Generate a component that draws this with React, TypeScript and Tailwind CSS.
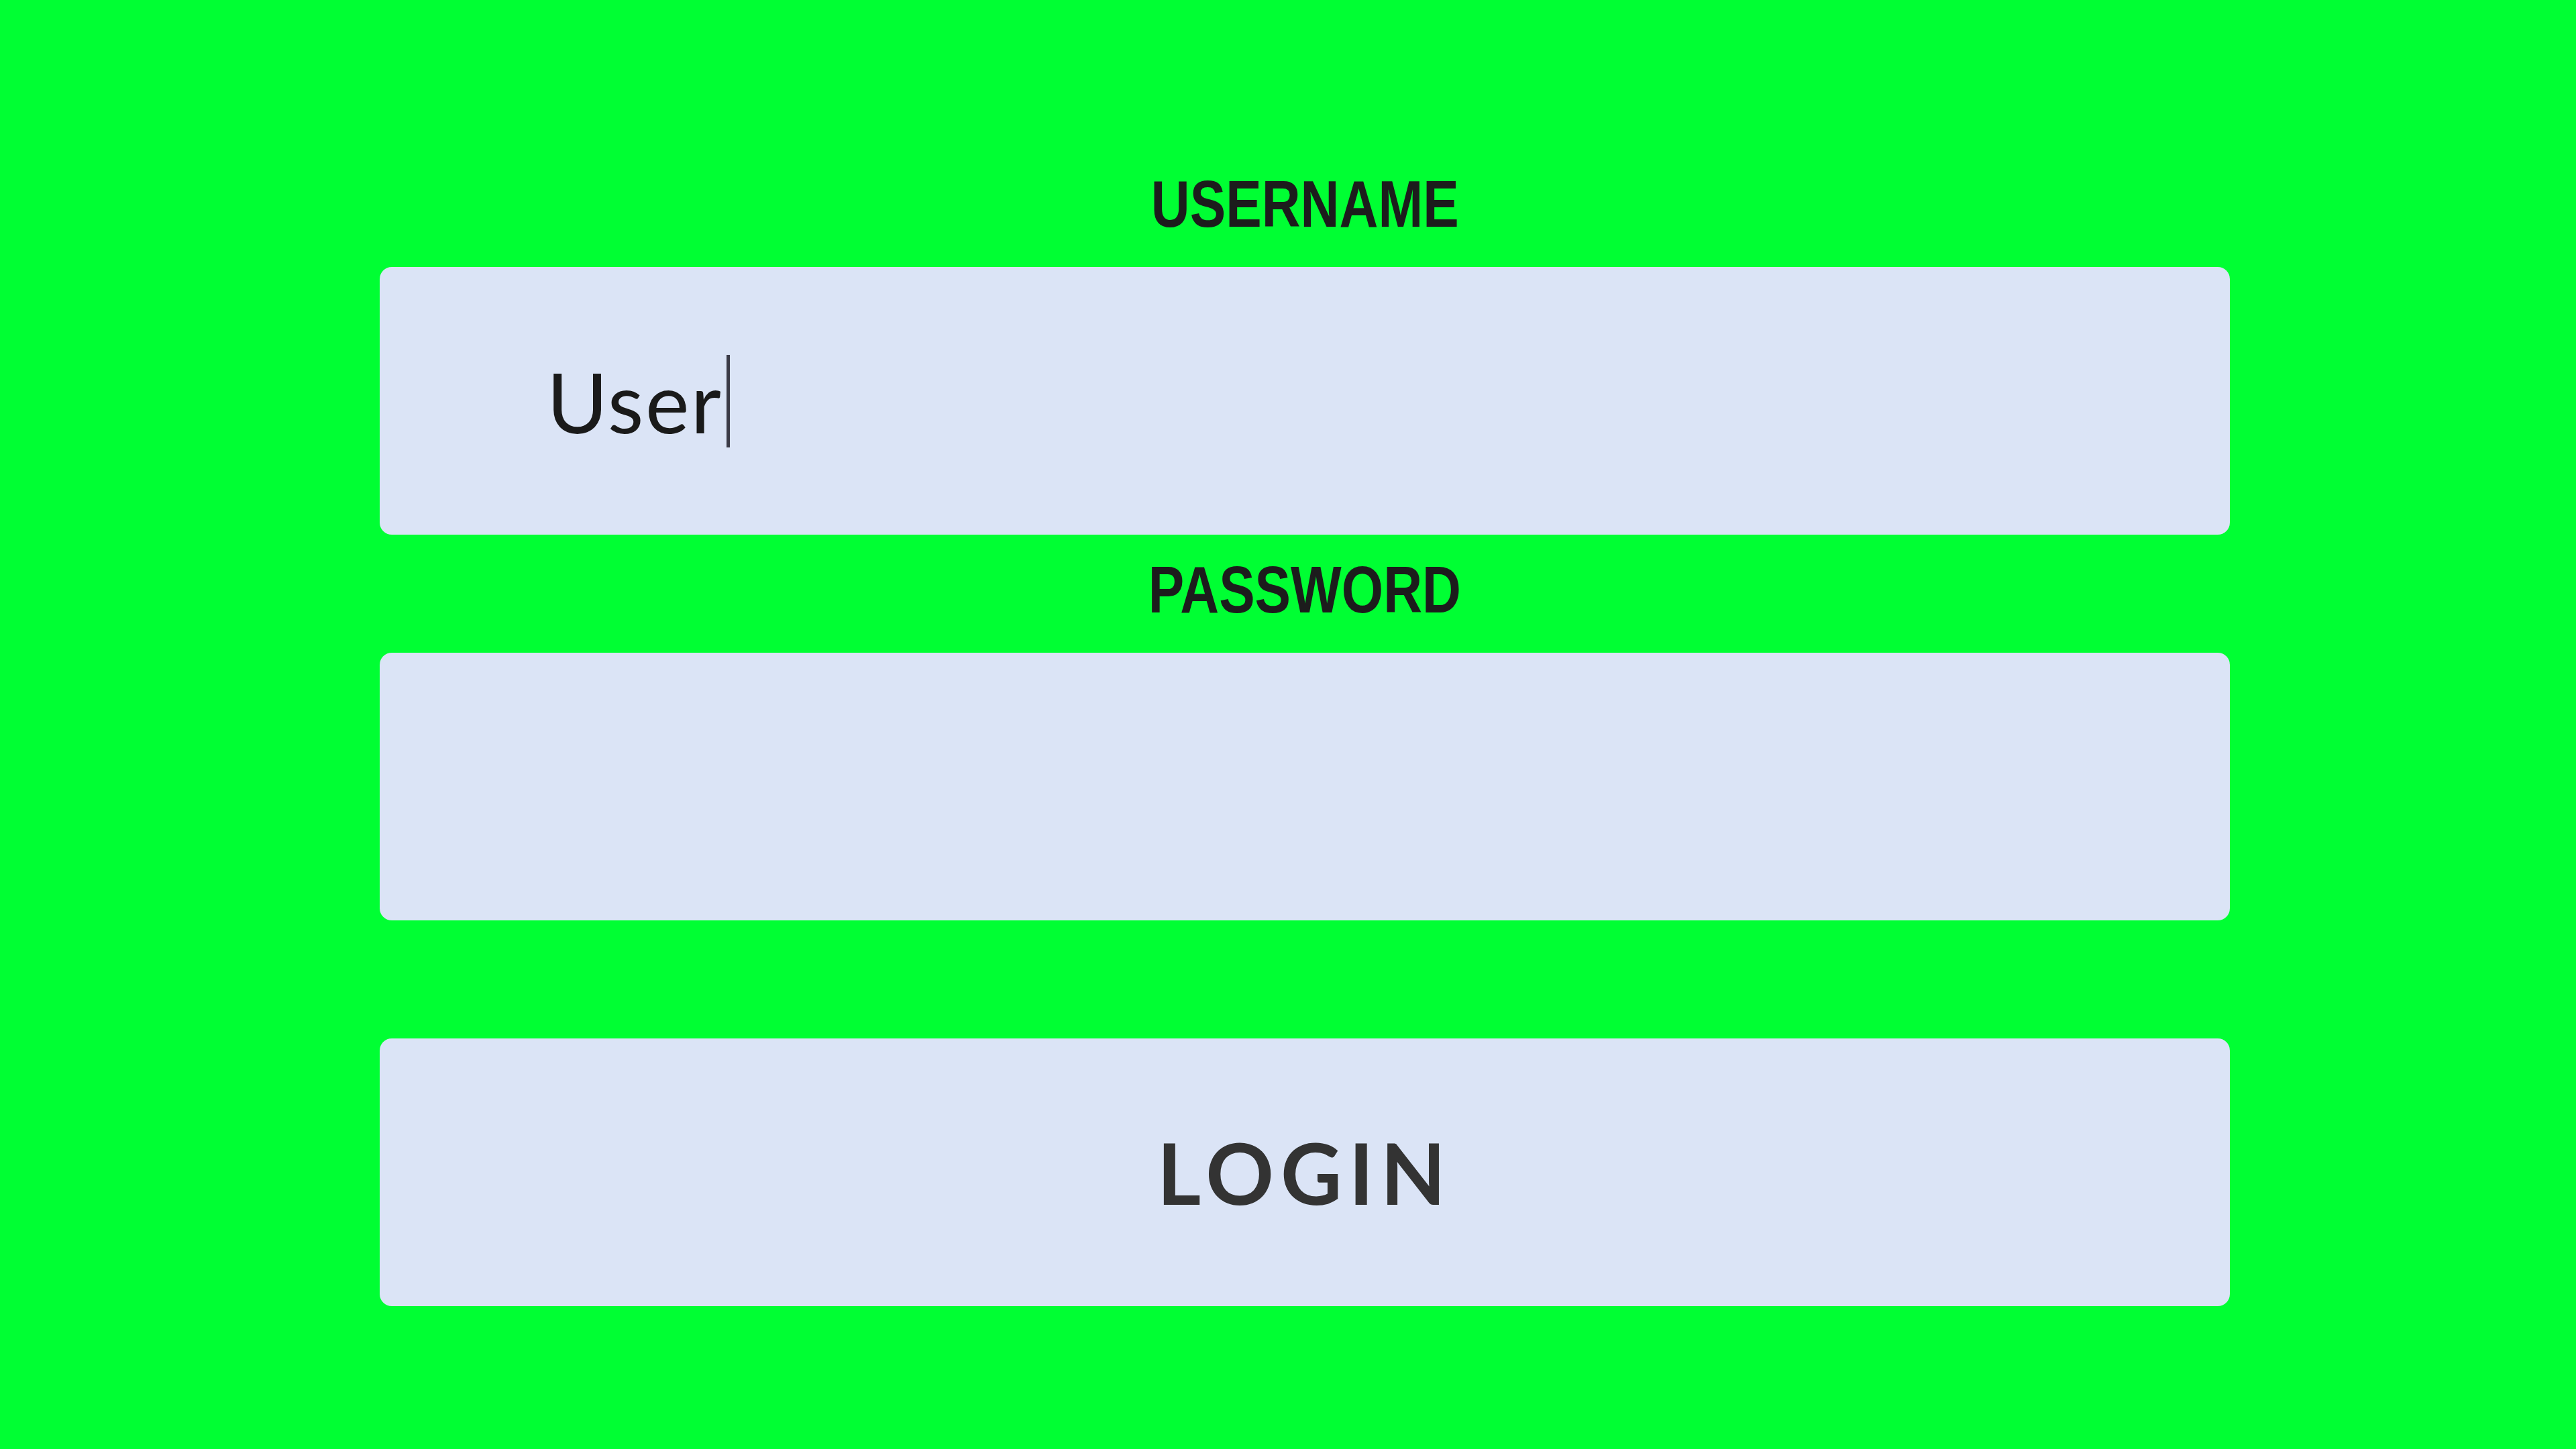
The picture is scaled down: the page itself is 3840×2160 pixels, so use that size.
import React from 'react';

function FieldLabel({ children }: { children: React.ReactNode }) {
  return (
    <div className="h-[176px] pb-[12px] text-center">
      <span className="inline-block scale-x-[0.81] text-[99px] leading-[164px] font-bold text-[#1c1c1c] font-['Liberation_Sans','Arial',sans-serif]">
        {children}
      </span>
    </div>
  );
}

function App() {
  return (
    <div className="min-h-screen bg-[#00ff33] pt-[222px] pl-[566px] pr-[516px]">
      <form className="flex flex-col" onSubmit={(e) => e.preventDefault()}>
        <FieldLabel>USERNAME</FieldLabel>
        <div className="h-[399px] rounded-[18px] bg-[#dbe4f6] flex items-center pl-[249px]">
          <span className="text-[124px] leading-none font-normal tracking-[0.02em] text-[#1a1a1a] font-['Lato',sans-serif]">User</span>
          <span className="inline-block w-[5px] h-[138px] ml-[6px] bg-[#3a3a46]" />
        </div>

        <FieldLabel>PASSWORD</FieldLabel>
        <div className="h-[399px] rounded-[18px] bg-[#dbe4f6]" />

        <button
          type="submit"
          className="mt-[176px] h-[399px] rounded-[18px] bg-[#dbe4f6] flex items-center justify-center"
        >
          <span className="text-[126px] leading-none font-bold tracking-[0.08em] text-[#333333] font-['Lato',sans-serif]">
            LOGIN
          </span>
        </button>
      </form>
    </div>
  );
}

export default App;
